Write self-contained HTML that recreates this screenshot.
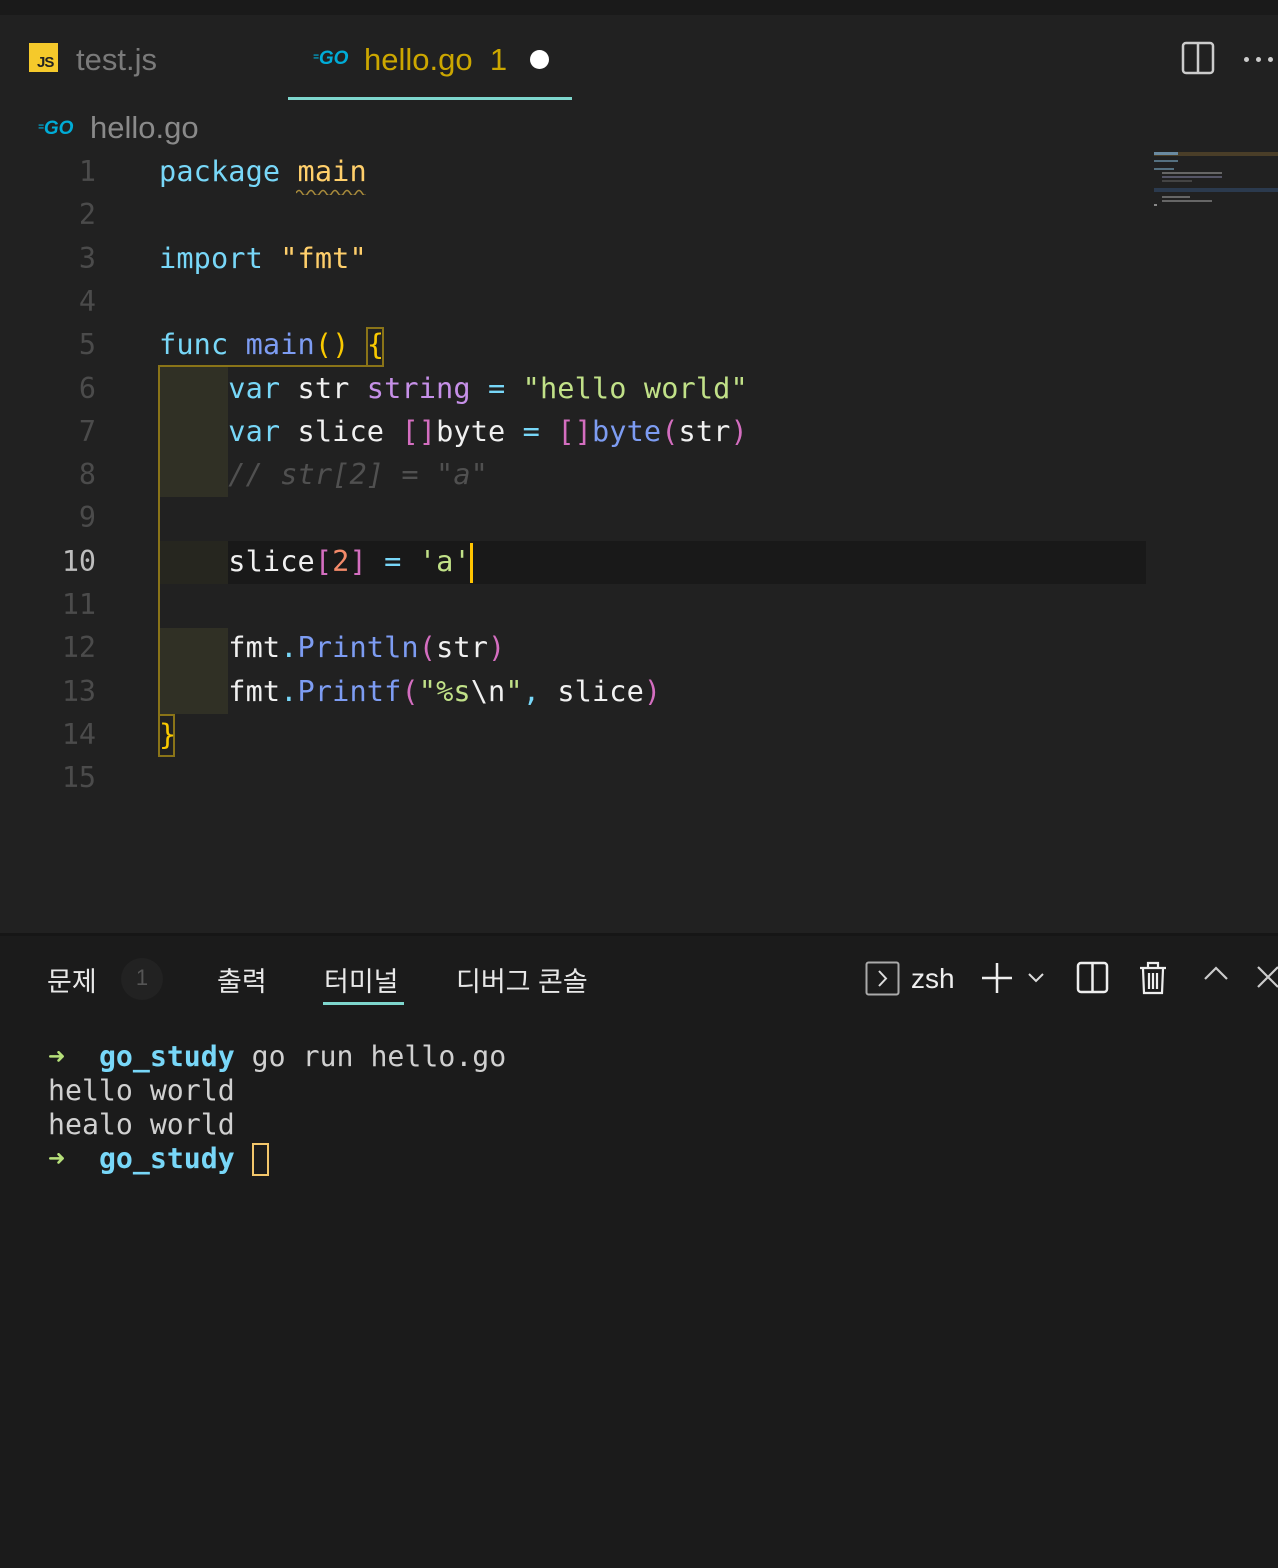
<!DOCTYPE html>
<html><head><meta charset="utf-8"><style>
*{margin:0;padding:0;box-sizing:border-box}
body{width:1278px;height:1568px;background:#212121;position:relative;overflow:hidden;font-family:"Liberation Sans","Noto Sans CJK KR",sans-serif}
.a{position:absolute}
.code{font-family:"DejaVu Sans Mono","Liberation Mono",monospace;font-size:28.6px;white-space:pre;letter-spacing:0.1px}
.ln{position:absolute;left:0;width:96px;text-align:right;color:#4b4b4b;font-family:"DejaVu Sans Mono",monospace;font-size:28.4px;line-height:43.3px}
.line{position:absolute;left:159px;line-height:43.3px;color:#f0f0f0}
.k{color:#78d7f8}.y{color:#ffcf6b}.p{color:#c690e8}.s{color:#c1e188}.m{color:#d46ec0}.f{color:#7d9cf2}.o{color:#f48a6a}.c{color:#505050;font-style:italic}.yb{color:#f9c900}
.term{font-family:"DejaVu Sans Mono",monospace;font-size:28.2px;line-height:34px;white-space:pre;color:#d0d0d0;position:absolute;left:48px}
</style></head><body>
<div class="a" style="left:0;top:0;width:1278px;height:15px;background:#1a1a1a"></div>
<div class="a" style="left:29px;top:43px;width:29px;height:29px;background:#f5c92b"><span class="a" style="left:8px;top:11px;font-size:15px;font-weight:bold;color:#222;letter-spacing:-1px">JS</span></div>
<div class="a" style="left:76px;top:42px;font-size:31px;color:#7a7a7a">test.js</div>
<div class="a" style="left:313px;top:48px;font-size:19px;font-weight:bold;font-style:italic;color:#00acd7"><span style="font-size:10px;vertical-align:4px">=</span>GO</div>
<div class="a" style="left:364px;top:42px;font-size:31px;color:#cca700">hello.go&nbsp; 1</div>
<div class="a" style="left:530px;top:50px;width:19px;height:19px;border-radius:50%;background:#fff"></div>
<div class="a" style="left:288px;top:97px;width:284px;height:3px;background:#7ed6cd"></div>
<svg class="a" style="left:1180px;top:40px" width="36" height="36" viewBox="0 0 36 36"><rect x="3" y="3" width="30" height="30" rx="3" fill="none" stroke="#ccc" stroke-width="2.5"/><line x1="18" y1="3" x2="18" y2="33" stroke="#ccc" stroke-width="2.5"/></svg>
<div class="a" style="left:1244px;top:57px;width:5px;height:5px;border-radius:50%;background:#ccc"></div>
<div class="a" style="left:1256px;top:57px;width:5px;height:5px;border-radius:50%;background:#ccc"></div>
<div class="a" style="left:1268px;top:57px;width:5px;height:5px;border-radius:50%;background:#ccc"></div>
<div class="a" style="left:38px;top:118px;font-size:19px;font-weight:bold;font-style:italic;color:#00acd7"><span style="font-size:10px;vertical-align:4px">=</span>GO</div>
<div class="a" style="left:90px;top:110px;font-size:31px;color:#8a8a8a">hello.go</div>
<div class="a" style="left:228px;top:541px;width:918px;height:43px;background:#191919"></div>
<div class="a" style="left:160px;top:366px;width:68px;height:131px;background:#303025"></div>
<div class="a" style="left:160px;top:541px;width:68px;height:43px;background:#26261f"></div>
<div class="a" style="left:160px;top:628px;width:68px;height:86px;background:#303025"></div>
<div class="a" style="left:158px;top:366px;width:2px;height:350px;background:#8a7418"></div>
<div class="a" style="left:158px;top:365px;width:226px;height:2px;background:#8a7418"></div>
<div class="a" style="left:366px;top:327px;width:18px;height:40px;border:2px solid #8a7418"></div>
<div class="a" style="left:158px;top:714px;width:17px;height:43px;border:2px solid #8a7418"></div>
<svg class="a" style="left:296px;top:187px" width="70" height="8"><path d="M0 6 Q3 1 6 6 T12 6 T18 6 T24 6 T30 6 T36 6 T42 6 T48 6 T54 6 T60 6 T66 6 T72 6" fill="none" stroke="#a88b3c" stroke-width="1.5"/></svg>
<div class="a" style="left:470px;top:543px;width:3px;height:40px;background:#ffc400"></div>
<div class="ln" style="top:150px">1</div>
<div class="ln" style="top:193px">2</div>
<div class="ln" style="top:237px">3</div>
<div class="ln" style="top:280px">4</div>
<div class="ln" style="top:323px">5</div>
<div class="ln" style="top:367px">6</div>
<div class="ln" style="top:410px">7</div>
<div class="ln" style="top:453px">8</div>
<div class="ln" style="top:496px">9</div>
<div class="ln" style="top:540px;color:#bdbdbd">10</div>
<div class="ln" style="top:583px">11</div>
<div class="ln" style="top:626px">12</div>
<div class="ln" style="top:670px">13</div>
<div class="ln" style="top:713px">14</div>
<div class="ln" style="top:756px">15</div>
<div class="line code" style="top:150px"><span class="k">package</span> <span class="y">main</span></div>
<div class="line code" style="top:237px"><span class="k">import</span> <span class="y">"fmt"</span></div>
<div class="line code" style="top:323px"><span class="k">func</span> <span class="f">main</span><span class="yb">()</span> <span class="yb">{</span></div>
<div class="line code" style="top:367px">    <span class="k">var</span> str <span class="p">string</span> <span class="k">=</span> <span class="s">"hello world"</span></div>
<div class="line code" style="top:410px">    <span class="k">var</span> slice <span class="m">[]</span>byte <span class="k">=</span> <span class="m">[]</span><span class="f">byte</span><span class="m">(</span>str<span class="m">)</span></div>
<div class="line code" style="top:453px">    <span class="c">// str[2] = "a"</span></div>
<div class="line code" style="top:540px">    slice<span class="m">[</span><span class="o">2</span><span class="m">]</span> <span class="k">=</span> <span class="s">'a'</span></div>
<div class="line code" style="top:626px">    fmt<span class="k">.</span><span class="f">Println</span><span class="m">(</span>str<span class="m">)</span></div>
<div class="line code" style="top:670px">    fmt<span class="k">.</span><span class="f">Printf</span><span class="m">(</span><span class="s">"%s</span>\n<span class="s">"</span><span class="k">,</span> slice<span class="m">)</span></div>
<div class="line code" style="top:713px"><span class="yb">}</span></div>
<div class="a" style="left:1154px;top:152px;width:124px;height:4px;background:#4a3e28"></div>
<div class="a" style="left:1154px;top:188px;width:124px;height:4px;background:#2b3a4e"></div>
<div class="a" style="left:1154px;top:152px;width:24px;height:3px;background:#6a8aa0"></div>
<div class="a" style="left:1154px;top:160px;width:24px;height:2px;background:#557080"></div>
<div class="a" style="left:1154px;top:168px;width:20px;height:2px;background:#557080"></div>
<div class="a" style="left:1162px;top:172px;width:60px;height:2px;background:#666"></div>
<div class="a" style="left:1162px;top:176px;width:60px;height:2px;background:#556"></div>
<div class="a" style="left:1162px;top:180px;width:30px;height:2px;background:#444"></div>
<div class="a" style="left:1162px;top:196px;width:28px;height:2px;background:#666"></div>
<div class="a" style="left:1162px;top:200px;width:50px;height:2px;background:#666"></div>
<div class="a" style="left:1154px;top:204px;width:3px;height:2px;background:#888"></div>
<div class="a" style="left:0;top:933px;width:1278px;height:635px;background:#1b1b1b;border-top:3px solid #161616"></div>
<div class="a" style="left:47px;top:960px;font-size:27px;color:#e8e8e8">문제</div>
<div class="a" style="left:121px;top:958px;width:42px;height:42px;border-radius:50%;background:#222;color:#555;font-size:22px;text-align:center;line-height:40px">1</div>
<div class="a" style="left:217px;top:960px;font-size:27px;color:#e8e8e8">출력</div>
<div class="a" style="left:324px;top:960px;font-size:27px;color:#e8e8e8">터미널</div>
<div class="a" style="left:323px;top:1002px;width:81px;height:3px;background:#7ed6cd"></div>
<div class="a" style="left:456px;top:960px;font-size:27px;color:#e8e8e8">디버그 콘솔</div>
<svg class="a" style="left:865px;top:961px" width="36" height="36"><rect x="1.5" y="1.5" width="32" height="32" rx="2" fill="none" stroke="#aaa" stroke-width="2"/><path d="M14 10 L21 17.5 L14 25" fill="none" stroke="#ddd" stroke-width="2"/></svg>
<div class="a" style="left:911px;top:963px;font-size:28px;color:#eee">zsh</div>
<svg class="a" style="left:980px;top:961px" width="70" height="36"><path d="M17 2 V32 M2 17 H32" stroke="#eee" stroke-width="2.5"/><path d="M49 13 L56 20 L63 13" fill="none" stroke="#ddd" stroke-width="2"/></svg>
<svg class="a" style="left:1076px;top:961px" width="34" height="34"><rect x="2" y="2" width="29" height="29" rx="3" fill="none" stroke="#eee" stroke-width="2.5"/><line x1="16.5" y1="2" x2="16.5" y2="31" stroke="#eee" stroke-width="2.5"/></svg>
<svg class="a" style="left:1138px;top:961px" width="30" height="34"><path d="M2 7 H28 M10 7 V2 H20 V7 M5 8 L6 32 H24 L25 8 M11 12 V28 M15 12 V28 M19 12 V28" fill="none" stroke="#eee" stroke-width="2.2"/></svg>
<svg class="a" style="left:1203px;top:965px" width="26" height="16"><path d="M2 14 L13 3 L24 14" fill="none" stroke="#ccc" stroke-width="2.2"/></svg>
<svg class="a" style="left:1256px;top:965px" width="22" height="26"><path d="M2 2 L22 22 M22 2 L2 22" fill="none" stroke="#ccc" stroke-width="2.2"/></svg>
<div class="term" style="top:1040px"><span style="color:#b6e07a;font-weight:bold">➜</span>  <span style="color:#78d7f8;font-weight:bold">go_study</span> go run hello.go</div>
<div class="term" style="top:1074px">hello world</div>
<div class="term" style="top:1108px">healo world</div>
<div class="term" style="top:1142px"><span style="color:#b6e07a;font-weight:bold">➜</span>  <span style="color:#78d7f8;font-weight:bold">go_study</span></div>
<div class="a" style="left:252px;top:1143px;width:17px;height:33px;border:2px solid #f2c66b"></div>
</body></html>
